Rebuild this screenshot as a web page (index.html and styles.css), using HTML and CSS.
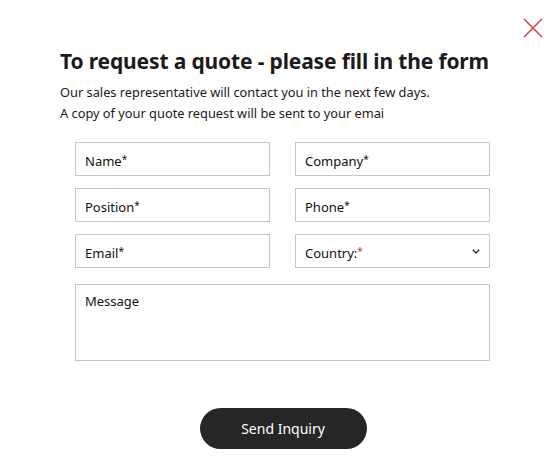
FILE: index.html
```html
<!DOCTYPE html>
<html>
<head>
<meta charset="utf-8">
<link rel="stylesheet" href="styles.css">
</head>
<body>
<div class="modal">
  <button class="close" aria-label="Close">
    <svg width="20" height="20" viewBox="0 0 20 20"><path d="M1 1L19 19M19 1L1 19" stroke="#d9434b" stroke-width="1.6" fill="none"/></svg>
  </button>
  <h1 class="title">To request a quote - please fill in the form</h1>
  <p class="lead">Our sales representative will contact you in the next few days.<br>A copy of your quote request will be sent to your emai</p>
  <form class="form">
    <div class="grid">
      <div class="field">Name<span class="ast">*</span></div>
      <div class="field">Company<span class="ast">*</span></div>
      <div class="field">Position<span class="ast">*</span></div>
      <div class="field">Phone<span class="ast">*</span></div>
      <div class="field">Email<span class="ast">*</span></div>
      <div class="field select">Country:<span class="ast red">*</span>
        <svg class="chev" width="8" height="5" viewBox="0 0 8 5"><path d="M0.8 0.8L4 4L7.2 0.8" stroke="#1f2a44" stroke-width="1.4" fill="none"/></svg>
      </div>
    </div>
    <div class="field message">Message</div>
    <div class="actions"><button type="button" class="send">Send Inquiry</button></div>
  </form>
</div>
</body>
</html>
```
FILE: styles.css
```css
* { box-sizing: border-box; }
html, body { margin: 0; background: #fff; }
body { font-family: "Noto Sans", "Open Sans", sans-serif; color: #1a1a1a; }
.modal { position: relative; width: 556px; height: 462px; padding: 45px 0 0 60px; }
.close { position: absolute; top: 18px; left: 523px; border: 0; background: none; padding: 0; width: 20px; height: 20px; }
.close svg { display: block; }
.title { margin: 0; font-size: 21px; font-weight: 700; line-height: 32px; color: #1b1b1b; letter-spacing: -0.15px; }
.lead { margin: 5px 0 0; font-size: 12.8px; line-height: 21px; color: #1a1a1a; }
.form { width: 415px; margin: 18px 0 0 15px; }
.grid { display: grid; grid-template-columns: 195px 195px; column-gap: 25px; row-gap: 12px; }
.field { position: relative; height: 34px; border: 1px solid #c6c8c8; padding: 8px 9px 0; font-size: 13px; line-height: 17px; color: #111; }
.ast { font-size: 10px; vertical-align: 3px; }
.ast.red { color: #e0313a; }
.chev { position: absolute; right: 9px; top: 14px; }
.message { height: 77px; margin-top: 16px; }
.actions { display: flex; justify-content: center; padding-top: 47px; }
.send { width: 167px; height: 41px; border: 0; border-radius: 21px; background: #262626; color: #fff; font-family: "Noto Sans", sans-serif; font-size: 14px; padding: 0; margin-left: 1px; }
```
